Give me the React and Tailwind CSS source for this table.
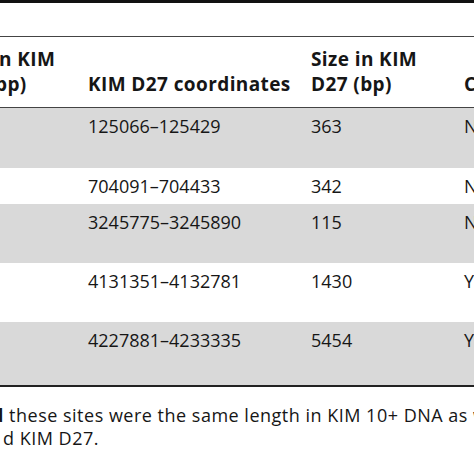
import React from 'react';

// Visible slice of the table: first column is cut off on the left edge
const ROWS = [
  { coords: '125066–125429', size: '363', last: 'N', h: 'h-[60px]', shaded: true },
  { coords: '704091–704433', size: '342', last: 'N', h: 'h-[36px]', shaded: false },
  { coords: '3245775–3245890', size: '115', last: 'N', h: 'h-[59px]', shaded: true },
  { coords: '4131351–4132781', size: '1430', last: 'Y', h: 'h-[59px]', shaded: false },
  { coords: '4227881–4233335', size: '5454', last: 'Y', h: 'h-[63px]', shaded: true },
];

const GRID = 'grid grid-cols-[88px_223px_153px_1fr]';

export default function App() {
  return (
    <div
      className="w-[474px] h-[474px] overflow-hidden bg-white text-[#161616]"
      style={{ fontFamily: '"Open Sans", "Noto Sans", sans-serif' }}
    >
      {/* Top rule and caption gap */}
      <div className="h-[3px] bg-[#111]" />
      <div className="h-[34px] border-b border-[#444]" />

      {/* Header */}
      <div className={`${GRID} h-[71px] border-b border-[#444] pt-[10px] font-bold text-[19px] tracking-[0.4px] leading-[25px] whitespace-nowrap`}>
        <div className="flex flex-col">
          <span className="-ml-[1px]">n KIM</span>
          <span className="-ml-[5px]">bp)</span>
        </div>
        <div className="flex flex-col justify-end pb-[10px]">
          <span>KIM D27 coordinates</span>
        </div>
        <div className="flex flex-col">
          <span>Size in KIM</span>
          <span>D27 (bp)</span>
        </div>
        <div className="flex flex-col justify-end pb-[10px]">
          <span>C</span>
        </div>
      </div>

      {/* Body */}
      {ROWS.map((row) => (
        <div
          key={row.coords}
          className={`${GRID} ${row.h} ${row.shaded ? 'bg-[#d9d9d9]' : 'bg-white'} pt-[6px] text-[18px] leading-[24px] whitespace-nowrap`}
        >
          <div />
          <div>{row.coords}</div>
          <div>{row.size}</div>
          <div>{row.last}</div>
        </div>
      ))}
      <div className="h-[2px] bg-[#222]" />

      {/* Footnote */}
      <div className="pt-[17px] text-[18px] tracking-[0.5px] leading-[23px] whitespace-nowrap">
        <div>
          <span className="font-bold -ml-[8px]">d</span> these sites were the same length in KIM 10+ DNA as was
        </div>
        <div className="pl-[3px]">d KIM D27.</div>
      </div>
    </div>
  );
}
